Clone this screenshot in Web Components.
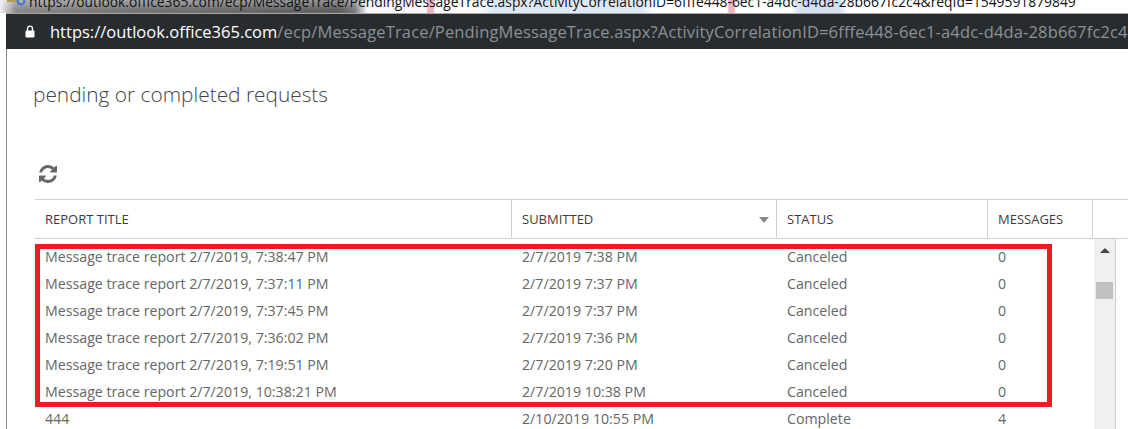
<!DOCTYPE html>
<html>
<head>
<meta charset="utf-8">
<title>pending or completed requests</title>
<style>
    html, body { margin: 0; padding: 0; background: #fff; }
    body { width: 1128px; height: 429px; overflow: hidden; font-family: "Open Sans", "Noto Sans", sans-serif; }
</style>
</head>
<body>
<desktop-strip></desktop-strip>
<address-bar></address-bar>
<trace-page>
    <trace-table></trace-table>
</trace-page>

<script>
class DesktopStrip extends HTMLElement {
    constructor() {
        super();
        this.attachShadow({ mode: 'open' });
        this.shadowRoot.innerHTML = `
            <style>
                :host {
                    display: block;
                    position: relative;
                    height: 13px;
                    overflow: hidden;
                    background:
                        linear-gradient(90deg, transparent 426px, #eeb4c0 428px, #eeb4c0 433px, transparent 435px),
                        linear-gradient(90deg, transparent 727px, #eeb4c0 729px, #eeb4c0 734px, transparent 736px),
                        linear-gradient(90deg, transparent 480px, #dde8f4 495px, #dde8f4 640px, transparent 655px),
                        linear-gradient(90deg, transparent 790px, #d5dff0 800px, #d5dff0 838px, transparent 848px),
                        linear-gradient(180deg, rgba(255,255,255,.35) 0, rgba(255,255,255,0) 10px),
                        linear-gradient(90deg, #f0f0f0 0, #8a8a8c 16px, #77777a 120px, #5f5f62 340px, #7a7a7d 355px, #f4f6f8 367px, #fff 560px);
                }
                .url {
                    font: 13.85px "Open Sans", sans-serif;
                    color: #111;
                    margin: -8px 0 0 29px;
                    white-space: nowrap;
                }
                .tab { position: absolute; left: 7px; top: 0; width: 9px; height: 2px; background: #b39a5c; }
                svg { position: absolute; left: 16px; top: -4px; }
            </style>
            <div class="url">https://outlook.office365.com/ecp/MessageTrace/PendingMessageTrace.aspx?ActivityCorrelationID=6fffe448-6ec1-a4dc-d4da-28b667fc2c4&amp;reqId=1549591879849</div>
            <i class="tab"></i>
            <svg width="10" height="10" viewBox="0 0 10 10">
                <circle cx="5" cy="5" r="3.4" fill="none" stroke="#4f78c4" stroke-width="2.4"/>
            </svg>
        `;
    }
}

class AddressBar extends HTMLElement {
    constructor() {
        super();
        this.attachShadow({ mode: 'open' });
        this.shadowRoot.innerHTML = `
            <style>
                :host {
                    display: flex;
                    align-items: center;
                    gap: 15px;
                    height: 35px;
                    margin-left: 6px;
                    padding-left: 19px;
                    background: #292c2f;
                    border-top: 1px solid #a8a8a8;
                    overflow: hidden;
                    white-space: nowrap;
                    font: 16.5px "Open Sans", sans-serif;
                    color: #8a9297;
                }
                svg { flex: none; }
                b { font-weight: 400; color: #fff; }
                em { font-style: normal; letter-spacing: .15px; }
            </style>
            <svg width="10" height="13" viewBox="0 0 10 13">
                <path fill="none" stroke="#fff" stroke-width="1.4" d="M2.5 6V3.6a2.5 2.5 0 0 1 5 0V6"/>
                <rect x="0.5" y="5.5" width="9" height="7" rx="1" fill="#fff"/>
            </svg>
            <span><b>https://outlook.office365.com</b><em>/ecp/MessageTrace/PendingMessageTrace.aspx?ActivityCorrelationID=6fffe448-6ec1-a4dc-d4da-28b667fc2c4</em></span>
        `;
    }
}

class TracePage extends HTMLElement {
    constructor() {
        super();
        this.attachShadow({ mode: 'open' });
        this.shadowRoot.innerHTML = `
            <style>
                :host {
                    display: block;
                    height: 381px;
                    margin-left: 6px;
                    padding-left: 28px;
                    border-left: 1px solid #8c8c8c;
                    overflow: hidden;
                }
                h1 {
                    margin: 28px 0 0 -2px;
                    font: 300 20.85px/34px "Open Sans", sans-serif;
                    color: #444;
                    height: 34px;
                }
                .tools { height: 34px; margin-top: 50px; padding: 4px 0 0 4px; }
                svg { display: block; }
            </style>
            <h1>pending or completed requests</h1>
            <div class="tools">
                <svg width="18" height="18" viewBox="128 128 1536 1536">
                    <path fill="#666" d="M1639 1056q0 5-1 7-64 268-268 434.5t-478 166.5q-146 0-282.5-55t-243.5-157l-129 129q-19 19-45 19t-45-19-19-45v-448q0-26 19-45t45-19h448q26 0 45 19t19 45-19 45l-137 137q71 66 161 102t187 36q134 0 250-65t186-179q11-17 53-117 8-23 30-23h192q13 0 22.5 9.5t9.5 22.5zm25-800v448q0 26-19 45t-45 19h-448q-26 0-45-19t-19-45 19-45l138-138q-148-137-349-137-134 0-250 65t-186 179q-11 17-53 117-8 23-30 23h-199q-13 0-22.5-9.5t-9.5-22.5v-7q65-268 270-434.5t480-166.5q146 0 284 55.5t245 156.5l130-129q19-19 45-19t45 19 19 45z"/>
                </svg>
            </div>
            <slot></slot>
        `;
    }
}

class TraceRow extends HTMLElement {
    constructor() {
        super();
        this.attachShadow({ mode: 'open' });
        this.shadowRoot.innerHTML = `
            <style>
                :host {
                    display: grid;
                    grid-template-columns: 477px 265px 211px 1fr;
                    height: 27px;
                    font: 14.2px/27px "Open Sans", sans-serif;
                    color: #666;
                    white-space: nowrap;
                }
                span { padding-left: 10px; }
            </style>
            <span>${this.getAttribute('report')}</span>
            <span>${this.getAttribute('submitted')}</span>
            <span>${this.getAttribute('status')}</span>
            <span>${this.getAttribute('messages')}</span>
        `;
    }
}

class TraceTable extends HTMLElement {
    constructor() {
        super();
        this.attachShadow({ mode: 'open' });
        const rows = [
            ['Message trace report 2/7/2019, 7:38:47 PM', '2/7/2019 7:38 PM', 'Canceled', '0'],
            ['Message trace report 2/7/2019, 7:37:11 PM', '2/7/2019 7:37 PM', 'Canceled', '0'],
            ['Message trace report 2/7/2019, 7:37:45 PM', '2/7/2019 7:37 PM', 'Canceled', '0'],
            ['Message trace report 2/7/2019, 7:36:02 PM', '2/7/2019 7:36 PM', 'Canceled', '0'],
            ['Message trace report 2/7/2019, 7:19:51 PM', '2/7/2019 7:20 PM', 'Canceled', '0'],
            ['Message trace report 2/7/2019, 10:38:21 PM', '2/7/2019 10:38 PM', 'Canceled', '0'],
            ['444', '2/10/2019 10:55 PM', 'Complete', '4']
        ];
        this.shadowRoot.innerHTML = `
            <style>
                :host { display: block; position: relative; width: 1093px; }
                .head {
                    display: grid;
                    grid-template-columns: 477px 265px 211px 105px 1fr;
                    height: 38px;
                    border-top: 1px solid #cfcfcf;
                    border-bottom: 1px solid #cfcfcf;
                    font: 13px/38px "Open Sans", sans-serif;
                    color: #3c3c3c;
                }
                .head div { padding-left: 10px; border-right: 1px solid #cfcfcf; position: relative; }
                .head div:last-child { border-right: 0; }
                .sort {
                    position: absolute; right: 7px; top: 17px;
                    border: 5px solid transparent; border-top: 6px solid #888; border-bottom: 0;
                }
                .body { display: flex; }
                .rows { width: 1059px; flex: none; padding-top: 4px; }
                .scroll {
                    width: 21px; height: 200px; flex: none;
                    background: #f0f0f0; border-right: 1px solid #cfcfcf;
                    display: flex; flex-direction: column; align-items: center;
                }
                .up { margin-top: 9px; border: 5px solid transparent; border-bottom: 5px solid #444; border-top: 0; }
                .thumb { width: 17px; height: 17px; margin-top: 29px; background: #c0c0c0; }
                .mark {
                    position: absolute; left: 0; top: 45px; width: 1007px; height: 153px;
                    border: 5px solid #ed1c24; pointer-events: none;
                }
            </style>
            <div class="head">
                <div>REPORT TITLE</div>
                <div>SUBMITTED<i class="sort"></i></div>
                <div>STATUS</div>
                <div>MESSAGES</div>
                <div></div>
            </div>
            <div class="body">
                <div class="rows">
                    ${rows.map(r => `<trace-row report="${r[0]}" submitted="${r[1]}" status="${r[2]}" messages="${r[3]}"></trace-row>`).join('')}
                </div>
                <div class="scroll"><i class="up"></i><i class="thumb"></i></div>
            </div>
            <div class="mark"></div>
        `;
    }
}

customElements.define('desktop-strip', DesktopStrip);
customElements.define('address-bar', AddressBar);
customElements.define('trace-page', TracePage);
customElements.define('trace-row', TraceRow);
customElements.define('trace-table', TraceTable);
</script>
</body>
</html>
